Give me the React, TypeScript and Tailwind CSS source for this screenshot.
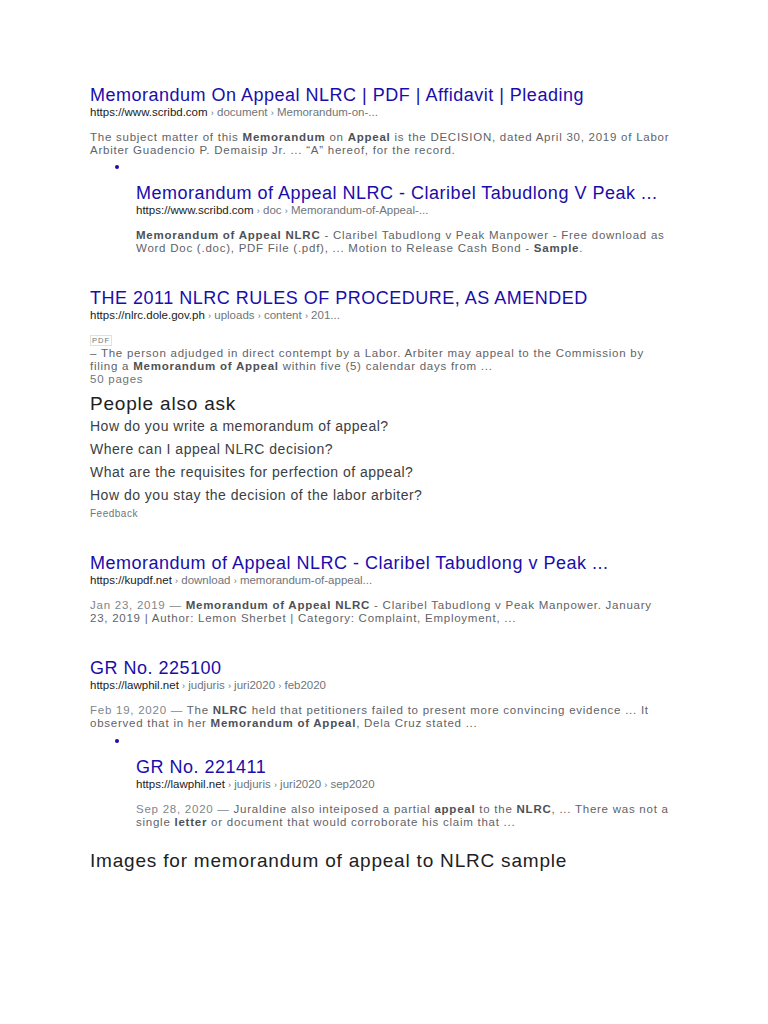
import React from "react";

const font = { fontFamily: '"Liberation Sans", Arial, sans-serif' };

function Crumbs({ domain, path }: { domain: string; path: string[] }) {
  return (
    <div className="text-[11.5px] leading-[14px] text-[#70757a]">
      <span className="text-[#202124]">{domain}</span>
      {path.map((p, i) => (
        <span key={i}>
          {" "}
          <span className="text-[9px]">›</span> {p}
        </span>
      ))}
    </div>
  );
}

function Result({
  title,
  domain,
  path,
  children,
}: {
  title: string;
  domain: string;
  path: string[];
  children: React.ReactNode;
}) {
  return (
    <div>
      <div className="text-[18px] leading-[19px] tracking-[0.5px] text-[#1a0dab]">{title}</div>
      <Crumbs domain={domain} path={path} />
      <div className="mt-[11px] text-[11.5px] leading-[13px] tracking-[0.75px] text-[#5f6368]">{children}</div>
    </div>
  );
}

function Bullet() {
  return <div className="ml-[25px] h-[4px] w-[4px] rounded-full bg-[#1a0dab]" />;
}

export default function App() {
  return (
    <div className="min-h-[1024px] w-[768px] bg-white pl-[90px] pt-[86px]" style={font}>
      <Result
        title="Memorandum On Appeal NLRC | PDF | Affidavit | Pleading"
        domain="https://www.scribd.com"
        path={["document", "Memorandum-on-..."]}
      >
        The subject matter of this <b className="text-[#4d5156]">Memorandum</b> on <b className="text-[#4d5156]">Appeal</b> is the DECISION, dated April 30, 2019 of Labor
        <br />
        Arbiter Guadencio P. Demaisip Jr. ... “A” hereof, for the record.
      </Result>
      <div className="mt-[8px]">
        <Bullet />
      </div>
      <div className="ml-[46px] mt-[15px]">
        <Result
          title="Memorandum of Appeal NLRC - Claribel Tabudlong V Peak ..."
          domain="https://www.scribd.com"
          path={["doc", "Memorandum-of-Appeal-..."]}
        >
          <b className="text-[#4d5156]">Memorandum of Appeal NLRC</b> - Claribel Tabudlong v Peak Manpower - Free download as
          <br />
          Word Doc (.doc), PDF File (.pdf), ... Motion to Release Cash Bond - <b className="text-[#4d5156]">Sample</b>.
        </Result>
      </div>

      <div className="mt-[34px]">
        <div className="text-[18px] leading-[19px] tracking-[0.5px] text-[#1a0dab]">THE 2011 NLRC RULES OF PROCEDURE, AS AMENDED</div>
        <Crumbs domain="https://nlrc.dole.gov.ph" path={["uploads", "content", "201..."]} />
        <div className="mt-[12px] flex">
          <span className="border border-[#e0e0e0] px-[1px] text-[7.5px] leading-[9px] tracking-[1px] text-[#70757a]">PDF</span>
        </div>
        <div className="mt-[1px] text-[11.5px] leading-[13px] tracking-[0.75px] text-[#5f6368]">
          – The person adjudged in direct contempt by a Labor. Arbiter may appeal to the Commission by
          <br />
          filing a <b className="text-[#4d5156]">Memorandum of Appeal</b> within five (5) calendar days from ...
          <br />
          <span className="text-[#70757a]">50 pages</span>
        </div>
      </div>

      <div className="mt-[7px]">
        <div className="text-[19px] leading-[22px] tracking-[0.8px] text-[#202124]">People also ask</div>
        <div className="flex flex-col text-[14px] leading-[23px] tracking-[0.5px] text-[#3c4043]">
          <div>How do you write a memorandum of appeal?</div>
          <div>Where can I appeal NLRC decision?</div>
          <div>What are the requisites for perfection of appeal?</div>
          <div>How do you stay the decision of the labor arbiter?</div>
        </div>
        <div className="text-[10px] leading-[14px] tracking-[0.5px] text-[#70757a]">Feedback</div>
      </div>

      <div className="mt-[33px]">
        <Result
          title="Memorandum of Appeal NLRC - Claribel Tabudlong v Peak ..."
          domain="https://kupdf.net"
          path={["download", "memorandum-of-appeal..."]}
        >
          <span className="text-[#80868b]">Jan 23, 2019 — </span>
          <b className="text-[#4d5156]">Memorandum of Appeal NLRC</b> - Claribel Tabudlong v Peak Manpower. January
          <br />
          23, 2019 | Author: Lemon Sherbet | Category: Complaint, Employment, ...
        </Result>
      </div>

      <div className="mt-[34px]">
        <Result title="GR No. 225100" domain="https://lawphil.net" path={["judjuris", "juri2020", "feb2020"]}>
          <span className="text-[#80868b]">Feb 19, 2020 — </span>The <b className="text-[#4d5156]">NLRC</b> held that petitioners failed to present more convincing evidence ... It
          <br />
          observed that in her <b className="text-[#4d5156]">Memorandum of Appeal</b>, Dela Cruz stated ...
        </Result>
      </div>
      <div className="mt-[9px]">
        <Bullet />
      </div>
      <div className="ml-[46px] mt-[15px]">
        <Result title="GR No. 221411" domain="https://lawphil.net" path={["judjuris", "juri2020", "sep2020"]}>
          <span className="text-[#80868b]">Sep 28, 2020 — </span>Juraldine also inteiposed a partial <b className="text-[#4d5156]">appeal</b> to the <b className="text-[#4d5156]">NLRC</b>, ... There was not a
          <br />
          single <b className="text-[#4d5156]">letter</b> or document that would corroborate his claim that ...
        </Result>
      </div>

      <div className="mt-[21px] text-[19px] leading-[22px] tracking-[0.8px] text-[#202124]">Images for memorandum of appeal to NLRC sample</div>
    </div>
  );
}
